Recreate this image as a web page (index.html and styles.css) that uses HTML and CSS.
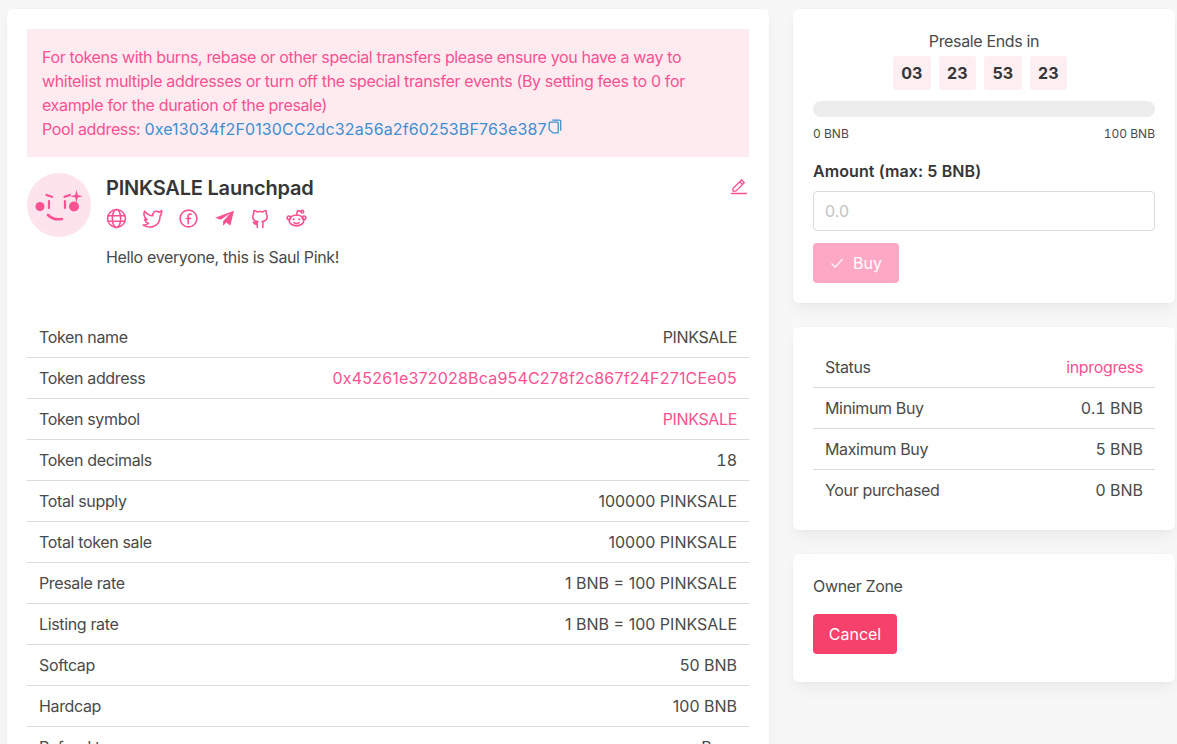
FILE: index.html
```html
<!DOCTYPE html>
<html lang="en">
<head>
<meta charset="utf-8">
<title>PINKSALE Launchpad</title>
<link rel="stylesheet" href="styles.css">
</head>
<body>
<div class="page">
  <main class="card main">
    <div class="notice">
      For tokens with burns, rebase or other special transfers please ensure you have a way to whitelist multiple addresses or turn off the special transfer events (By setting fees to 0 for example for the duration of the presale)<br>
      Pool address: <a class="pool">0xe13034f2F0130CC2dc32a56a2f60253BF763e387<svg class="copy" viewBox="0 0 14 14" width="15" height="15"><path d="M5 1h6.800a1 1 0 0 1 1 1v9M2.800 3h6.900a.8.8 0 0 1 .8.8v8.400a.8.8 0 0 1-.8.8H5.500L2 9.800V3.800a.8.8 0 0 1 .8-.8z" fill="none" stroke="currentColor" stroke-width="1.200"/></svg></a>
    </div>
    <div class="profile">
      <svg class="avatar" viewBox="0 0 64 64" width="64" height="64">
        <circle cx="32" cy="32" r="32" fill="#fde4ec"/>
        <g fill="#f95192">
          <circle cx="13" cy="33.500" r="4.500"/>
          <circle cx="47" cy="33.500" r="5"/>
          <path d="M49.500 17l1.300 5 5 1.300-5 1.300-1.300 5-1.300-5-5-1.300 5-1.300z"/>
        </g>
        <g fill="none" stroke="#f95192" stroke-width="2.200" stroke-linecap="round">
          <path d="M19.500 22l5.500 1.800M43 22l-5.500 1.800M22 28v7M38 28v7"/>
          <path d="M21 42c3 3 8 5 14 4" stroke-width="2.600"/>
        </g>
      </svg>
      <div class="info">
        <h1 class="name">PINKSALE Launchpad</h1>
        <div class="socials">
          <svg viewBox="0 0 20 20" width="21" height="21"><circle cx="10" cy="10" r="8.500"/><ellipse cx="10" cy="10" rx="4" ry="8.500"/><path d="M2 7.300h16M2 12.700h16"/></svg>
          <svg viewBox="0 0 20 20" width="21" height="21"><path d="M18.800 2.500c-.8.700-1.800 1.200-2.800 1.500-1.500-1.700-4.400-1-5.300.8-.4.700-.5 1.500-.3 2.500C7.500 7.300 4.600 5.700 2.500 3c-1 1.700-1.200 5.800 2.300 8.200-1 .2-1.600.1-2.300-.1.700 2 2.200 3.100 3.700 3.500-1 1.100-2.600 1.900-5 1.700 7 4.200 16 .8 16-8.500 1-.9 1.500-2.500 1.600-4.800z"/></svg>
          <svg viewBox="0 0 20 20" width="21" height="21"><circle cx="10" cy="10" r="8"/><path d="M12.500 5.800h-1.100c-1.100 0-1.700.7-1.700 1.800v7.400M8 10h4"/></svg>
          <svg viewBox="0 0 20 20" width="21" height="21" class="solid"><path d="M19 2.500L1 9.400l5.300 1.900 9-6-6.600 7.300-.1 4.400 3-3.200 4 2.900z"/></svg>
          <svg viewBox="0 0 20 20" width="21" height="21"><path d="M7 18.500v-3c-2 .3-3-.2-3.800-2 1 .2 2 .8 3.500 1 .1-.7.300-1.100.7-1.500-3-.4-4.800-2-4.800-4.800 0-1.200.4-2 1-2.800-.2-.9-.2-2 .2-3 1.200 0 2.200.6 3 1.300 1.500-.4 3.900-.4 5.400 0 .8-.7 1.800-1.300 3-1.300.4 1 .4 2.100.2 3 .6.8 1 1.600 1 2.800 0 2.800-1.800 4.400-4.800 4.800.5.500.7 1.200.7 2v3.500"/></svg>
          <svg viewBox="0 0 20 20" width="21" height="21"><ellipse cx="10" cy="11.800" rx="7" ry="5.200"/><circle cx="2.800" cy="9.300" r="1.700"/><circle cx="17.200" cy="9.300" r="1.700"/><path d="M10 6.500l1-4 3.500.8"/><circle cx="15.500" cy="3.500" r="1.300"/><circle cx="7.300" cy="10.800" r="1" class="dot"/><circle cx="12.700" cy="10.800" r="1" class="dot"/><path d="M7.500 14c1.500 1 3.500 1 5 0"/></svg>
        </div>
        <p class="bio">Hello everyone, this is Saul Pink!</p>
      </div>
      <svg class="edit" viewBox="0 0 18 18" width="18" height="18"><path d="M3 11.500L11.500 3l2.800 2.800-8.500 8.300H3zM9.800 4.700l2.800 2.800M1 16.500h16"/></svg>
    </div>
    <table class="table token">
      <tr><td>Token name</td><td class="word">PINKSALE</td></tr>
      <tr><td>Token address</td><td class="pink hash">0x45261e372028Bca954C278f2c867f24F271CEe05</td></tr>
      <tr><td>Token symbol</td><td class="pink word">PINKSALE</td></tr>
      <tr><td>Token decimals</td><td class="num">18</td></tr>
      <tr><td>Total supply</td><td>100000 PINKSALE</td></tr>
      <tr><td>Total token sale</td><td>10000 PINKSALE</td></tr>
      <tr><td>Presale rate</td><td>1 BNB = 100 PINKSALE</td></tr>
      <tr><td>Listing rate</td><td>1 BNB = 100 PINKSALE</td></tr>
      <tr><td>Softcap</td><td>50 BNB</td></tr>
      <tr><td>Hardcap</td><td>100 BNB</td></tr>
      <tr><td>Refund type</td><td>Burn</td></tr>
    </table>
  </main>
  <aside class="side">
    <section class="card sale">
      <div class="ends">Presale Ends in</div>
      <div class="timer"><span>03</span><span>23</span><span>53</span><span>23</span></div>
      <div class="bar"></div>
      <div class="scale num"><span>0 BNB</span><span>100 BNB</span></div>
      <label class="label" for="amount">Amount (max: 5 BNB)</label>
      <input class="input" id="amount" placeholder="0.0">
      <button class="buy"><svg viewBox="0 0 14 14" width="14" height="14"><path d="M1.500 7.500l3.700 3.700 7.300-8" fill="none" stroke="currentColor" stroke-width="1.200"/></svg>Buy</button>
    </section>
    <section class="card stats">
      <table class="table">
        <tr><td>Status</td><td class="pink word">inprogress</td></tr>
        <tr><td>Minimum Buy</td><td class="num">0.1 BNB</td></tr>
        <tr><td>Maximum Buy</td><td>5 BNB</td></tr>
        <tr><td>Your purchased</td><td>0 BNB</td></tr>
      </table>
    </section>
    <section class="card owner">
      <div class="owner-title">Owner Zone</div>
      <button class="cancel">Cancel</button>
    </section>
  </aside>
</div>
</body>
</html>
```
FILE: styles.css
```css
* { box-sizing: border-box; }
html, body { height: 100%; }
body {
  margin: 0;
  overflow: hidden;
  background: #f7f7f7;
  color: #4a4a4a;
  font-family: Inter, "Liberation Sans", sans-serif;
  font-size: 16px;
  line-height: 24px;
  letter-spacing: -0.35px;
}
.num { font-variant-numeric: tabular-nums; }
.page {
  display: flex;
  align-items: flex-start;
  gap: 24px;
  padding: 9px 2px 0 7px;
}
.card {
  background: #fff;
  border-radius: 6px;
  box-shadow: 0 8px 16px -2px rgba(10, 10, 10, 0.06), 0 0 0 1px rgba(10, 10, 10, 0.01);
}
.main { width: 762px; flex: none; padding: 20px; }
.side { width: 382px; flex: none; display: flex; flex-direction: column; gap: 24px; }
.notice {
  background: #feebf0;
  color: #f95192;
  padding: 16px 15px;
  height: 128px;
}
.pool { color: #3e8ed0; letter-spacing: 0.13px; }
.copy { vertical-align: 1px; color: #3e8ed0; }
.profile { display: flex; position: relative; margin-top: 16px; height: 144px; }
.avatar { flex: none; }
.info { margin-left: 15px; }
.name { margin: 3px 0 0; font-size: 20px; line-height: 24px; font-weight: 600; letter-spacing: -0.2px; color: #363636; }
.socials { display: flex; gap: 15px; margin-top: 8px; height: 21px; }
.socials svg { fill: none; stroke: #f95192; stroke-width: 1.500; stroke-linejoin: round; stroke-linecap: round; }
.socials .solid { fill: #f95192; stroke: none; }
.socials .dot { fill: #f95192; stroke: none; }
.bio { margin: 16px 0 0; }
.edit { position: absolute; right: 1px; top: 4px; fill: none; stroke: #f95192; stroke-width: 1.300; }
.table { width: 100%; border-collapse: separate; border-spacing: 0; }
.table td { height: 41px; padding: 0 12px; border-bottom: 1px solid #dbdbdb; }
.table td:last-child { text-align: right; letter-spacing: 0; }
.table td.word { letter-spacing: -0.35px; }
.table td.hash { letter-spacing: 0.19px; }
.table tr:last-child td { border-bottom: 0; padding-bottom: 1px; }
.pink { color: #f95192; }
.sale { height: 294px; padding: 20px; }
.ends { text-align: center; }
.timer { display: flex; justify-content: center; gap: 8px; margin-top: 3px; padding-right: 8px; }
.timer span {
  background: #fdeef2;
  border-radius: 3px;
  width: 37.500px;
  height: 34px;
  line-height: 34px;
  text-align: center;
  color: #363636;
  font-weight: 700;
  letter-spacing: 0;
}
.bar { height: 16px; margin-top: 11px; background: #ededed; border-radius: 8px; }
.scale { display: flex; justify-content: space-between; margin-top: 5px; font-size: 12px; line-height: 24px; letter-spacing: 0; }
.label { display: block; margin-top: 13px; font-weight: 600; letter-spacing: 0.1px; color: #363636; }
.input {
  display: block;
  width: 100%;
  height: 40px;
  margin-top: 8px;
  padding: 0 11px;
  border: 1px solid #dbdbdb;
  border-radius: 4px;
  font: inherit;
  outline: none;
}
.input::placeholder { color: #c4c4c4; }
.buy {
  display: flex;
  align-items: center;
  justify-content: center;
  gap: 9px;
  width: 86px;
  height: 40px;
  margin-top: 12px;
  border: 0;
  border-radius: 4px;
  background: #fda9c6;
  color: #fff;
  font: inherit;
}
.stats { height: 203px; padding: 20px; }
.owner { height: 128px; padding: 20px; }
.owner-title { line-height: 24px; }
.cancel {
  display: block;
  width: 84px;
  height: 40px;
  margin-top: 16px;
  border: 0;
  border-radius: 4px;
  background: #f5416c;
  color: #fff;
  font: inherit;
}
```
